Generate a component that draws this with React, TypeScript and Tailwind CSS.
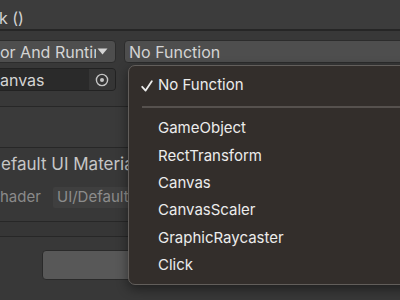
const items = ["GameObject", "RectTransform", "Canvas", "CanvasScaler", "GraphicRaycaster", "Click"]

function FunctionMenu() {
  return (
    <div className="absolute left-[128px] top-[65px] w-[300px] h-[220px] rounded-[7px] border border-[#625e5b] bg-[#332e2b] pt-[6px] shadow-[0_4px_12px_rgba(0,0,0,0.45)]">
      <div className="flex h-[27px] items-center pl-[12px] text-[15px] text-[#ececec]">
        <svg width="12" height="12" viewBox="0 0 12 12" className="mr-[5px]">
          <path d="M1.2 6.8 L4.6 10.6 L10.8 1.2" fill="none" stroke="#ececec" strokeWidth="1.8" strokeLinecap="round" strokeLinejoin="round" />
        </svg>
        <span>No Function</span>
      </div>
      <div className="py-[7px] pl-[13px]">
        <div className="h-[2px] bg-[#56514e]" />
      </div>
      {items.map(item => (
        <div key={item} className="flex h-[27.3px] items-center pl-[29px] text-[15px] text-[#ececec]">
          {item}
        </div>
      ))}
    </div>
  )
}

export default function App() {
  return (
    <div className="relative h-[300px] w-[400px] overflow-hidden bg-[#383838] font-['Inter',sans-serif]">
      <div className="flex h-[31px] items-center border-b-2 border-[#262626] bg-[#3c3c3c] pt-[6px] text-[16px] text-[#d2d2d2]">
        <span className="ml-[-1px]">k ()</span>
      </div>

      <div className="pt-[9px]">
        <div className="flex h-[23px] gap-[8px]">
          <div className="ml-[-6px] flex w-[122px] items-center rounded-[4px] border border-[#2c2c2c] bg-[#4e4e4e] pl-[5px] pr-[7px]">
            <span className="w-[96px] overflow-hidden whitespace-nowrap text-[16px] text-[#d4d4d4]">or And Runtir</span>
            <svg width="11" height="7" viewBox="0 0 11 7" className="ml-[1px]">
              <path d="M0.5 0.5 H10.5 L5.5 6.5 Z" fill="#d4d4d4" />
            </svg>
          </div>
          <div className="mr-[-10px] flex flex-1 items-center rounded-[4px] border border-[#2c2c2c] bg-[#4e4e4e] pl-[4px] text-[16px] text-[#d4d4d4]">
            No Function
          </div>
        </div>

        <div className="mt-[5px] flex h-[23px]">
          <div className="ml-[-6px] flex w-[122px] items-center overflow-hidden rounded-[4px] border border-[#222] bg-[#2a2a2a]">
            <span className="flex-1 pl-[5px] text-[16px] text-[#d4d4d4]">anvas</span>
            <div className="flex h-full w-[26px] items-center justify-center bg-[#353535]">
              <svg width="14" height="14" viewBox="0 0 14 14">
                <circle cx="7" cy="7" r="5.6" fill="none" stroke="#c4c4c4" strokeWidth="1.4" />
                <circle cx="7" cy="7" r="2" fill="#c4c4c4" />
              </svg>
            </div>
          </div>
        </div>
      </div>

      <div className="mt-[15px] h-[42px] border-y border-[#272727] bg-[#3a3a3a]" />

      <div className="flex h-[34px] items-center text-[17px] text-[#c6c6c6]">
        <span className="ml-[1px] whitespace-nowrap">efault UI Material</span>
      </div>

      <div className="mt-[5px] flex h-[21px] items-center">
        <span className="w-[53px] text-[15px] text-[#8a8a8a]">hader</span>
        <div className="flex h-full w-[120px] items-center rounded-[2px] bg-[#3f3f3f] pl-[4px] text-[15px] text-[#8c8c8c]">
          UI/Default
        </div>
      </div>

      <div className="mt-[13px] h-[16px] border-y border-[#272727] bg-[#363636]" />

      <div className="mt-[13px] pl-[42px]">
        <div className="h-[30px] w-[200px] rounded-[4px] border border-[#2a2a2a] bg-[#585858]" />
      </div>

      <FunctionMenu />
    </div>
  )
}
